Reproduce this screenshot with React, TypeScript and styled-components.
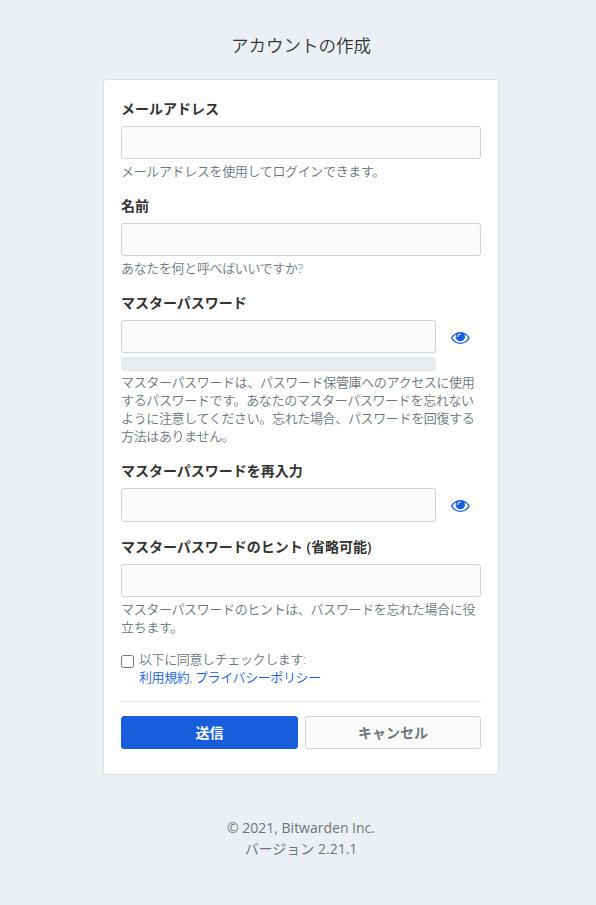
import React from "react";
import styled, { createGlobalStyle } from "styled-components";

const Global = createGlobalStyle`
  * { box-sizing: border-box; }
  body { margin: 0; background: #ecf0f5; color: #333; font: 14px/21px "Open Sans", "Noto Sans CJK JP", sans-serif; }
`;
const Page = styled.main`
  display: flex; flex-direction: column; align-items: center;
  width: 596px; height: 905px; padding: 33px 0 0 6px; overflow: hidden;
`;
const Title = styled.h1`
  margin: 0 0 21px; font-size: 17.5px; line-height: 25px; font-weight: 350;
`;
const Card = styled.form`
  width: 396px; height: 696px; padding: 18px 17px; background: #fff;
  border: 1px solid #dcdfe3; border-radius: 3px;
`;
const Field = styled.div<{ $h: number }>`height: ${p => p.$h}px;`;
const Label = styled.label`
  display: block; height: 28px; font-weight: 600; line-height: 21px; white-space: nowrap;
`;
const Row = styled.div`display: flex; align-items: center;`;
const Input = styled.input<{ $short?: boolean; $tall?: boolean }>`
  display: block; width: ${p => (p.$short ? 315 : 360)}px; height: ${p => (p.$tall ? 34 : 33)}px; padding: 6px 12px;
  border: 1px solid #ced4da; border-radius: 3px; background: #fbfbfb; outline: none;
`;
const Eye = styled.button`
  display: flex; margin-left: 15px; padding: 1px 0 0; border: 0; background: none; color: #175ddc;
`;
const Meter = styled.div`width: 315px; height: 14px; margin-top: 4px; border-radius: 3px; background: #e9ecef;`;
const Help = styled.div<{ $top?: number }>`
  margin-top: ${p => p.$top ?? 3}px; color: #6c757d; font-size: 13px; line-height: 18px; white-space: nowrap;
  font-weight: 350; letter-spacing: -0.35px;
`;
const Terms = styled.div`
  display: flex; height: 51px; color: #6c757d; font-size: 13px; line-height: 18px;
  font-weight: 350; letter-spacing: -0.38px;
`;
const Check = styled.input`width: 13px; height: 13px; margin: 5px 5px 0 0;`;
const Link = styled.a`color: #175ddc;`;
const Actions = styled.div`
  display: flex; gap: 7px; padding-top: 14px; border-top: 1px solid #e1e3e5;
`;
const Button = styled.button<{ $primary?: boolean }>`
  flex: ${p => (p.$primary ? "0 0 177px" : "1")}; height: 33px; padding: 0; border-radius: 3px;
  font: 600 14px/21px "Open Sans", "Noto Sans CJK JP", sans-serif;
  border: 1px solid ${p => (p.$primary ? "#175ddc" : "#ced4da")};
  background: ${p => (p.$primary ? "#175ddc" : "#fbfbfb")};
  color: ${p => (p.$primary ? "#fff" : "#6c757d")};
`;
const Footer = styled.footer`margin-top: 42px; text-align: center; color: #6c757d;`;

const EyeButton = () => (
  <Eye type="button">
    <svg width="18.67" height="18.67" viewBox="0 0 1792 1792" fill="currentColor">
      <path d="M1664 960q-152-236-381-353 61 104 61 225 0 185-131.5 316.5t-316.5 131.5-316.5-131.5-131.5-316.5q0-121 61-225-229 117-381 353 133 205 333.5 326.5t434.5 121.5 434.5-121.5 333.5-326.5zm-720-384q0-20-14-34t-34-14q-125 0-214.5 89.5t-89.5 214.5q0 20 14 34t34 14 34-14 14-34q0-86 61-147t147-61q20 0 34-14t14-34zm848 384q0 34-20 69-140 230-376.5 368.5t-499.5 138.5-499.5-139-376.5-368q-20-35-20-69t20-69q140-229 376.5-368t499.5-139 499.5 139 376.5 368q20 35 20 69z" />
    </svg>
  </Eye>
);

export default function App() {
  return (
    <Page>
      <Global />
      <Title>アカウントの作成</Title>
      <Card>
        <Field $h={97}><Label>メールアドレス</Label><Input /><Help>メールアドレスを使用してログインできます。</Help></Field>
        <Field $h={97}><Label>名前</Label><Input /><Help>あなたを何と呼べばいいですか?</Help></Field>
        <Field $h={168}>
          <Label>マスターパスワード</Label>
          <Row><Input $short /><EyeButton /></Row>
          <Meter />
          <Help $top={2}>マスターパスワードは、パスワード保管庫へのアクセスに使用<br />するパスワードです。あなたのマスターパスワードを忘れない<br />ように注意してください。忘れた場合、パスワードを回復する<br />方法はありません。</Help>
        </Field>
        <Field $h={76}><Label>マスターパスワードを再入力</Label><Row><Input $short $tall /><EyeButton /></Row></Field>
        <Field $h={114}>
          <Label>マスターパスワードのヒント (省略可能)</Label><Input />
          <Help>マスターパスワードのヒントは、パスワードを忘れた場合に役<br />立ちます。</Help>
        </Field>
        <Terms><Check type="checkbox" /><div>以下に同意しチェックします:<br /><Link>利用規約</Link>, <Link>プライバシーポリシー</Link></div></Terms>
        <Actions><Button type="button" $primary>送信</Button><Button type="button">キャンセル</Button></Actions>
      </Card>
      <Footer>© 2021, Bitwarden Inc.<br />バージョン 2.21.1</Footer>
    </Page>
  );
}
